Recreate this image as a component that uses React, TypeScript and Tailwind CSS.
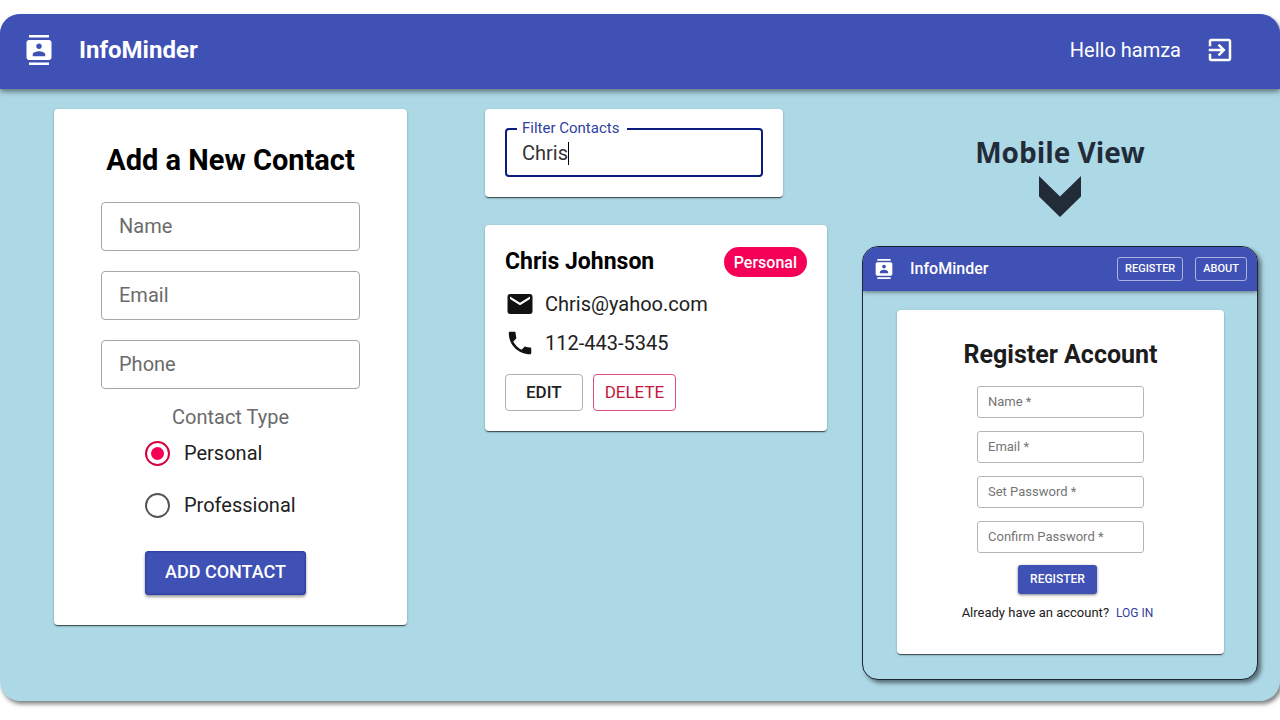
import { useState } from "react";
import type { ReactNode } from "react";
import { MdContacts, MdEmail, MdExitToApp, MdPhone } from "react-icons/md";

const paper =
  "rounded bg-white shadow-[0_2px_1px_-1px_rgba(0,0,0,0.5),0_1px_1px_0_rgba(0,0,0,0.2),0_1px_3px_0_rgba(0,0,0,0.2)]";

type FieldProps = { label: string; type?: string };

function ContactField({ label, type = "text" }: FieldProps) {
  return (
    <input
      type={type}
      aria-label={label}
      placeholder={label}
      className="h-[49px] w-full rounded border border-[#a6a6a6] px-[17px] pb-[2px] text-xl text-[#212121] placeholder:text-[#6b6b6b]"
    />
  );
}

function RegisterField({ label, type = "text" }: FieldProps) {
  return (
    <input
      type={type}
      aria-label={label}
      placeholder={label}
      className="h-8 w-full rounded-[3px] border border-[#b5b5b5] px-[10px] pb-[2px] text-[13px] text-[#212121] placeholder:text-[#757575]"
    />
  );
}

type ChoiceProps = { label: string; checked: boolean; onSelect: () => void };

function TypeChoice({ label, checked, onSelect }: ChoiceProps) {
  return (
    <label className="flex h-[52px] items-center gap-[14px] text-xl text-[#212121]">
      <input
        type="radio"
        name="contact-type"
        checked={checked}
        onChange={onSelect}
        className="size-[25px] shrink-0 appearance-none rounded-full border-2 border-[#555] bg-clip-content p-1 checked:border-[#d5003c] checked:bg-[#f50057]"
      />
      {label}
    </label>
  );
}

function AddContactCard() {
  const [kind, setKind] = useState("Personal");
  return (
    <form className={`${paper} flex flex-col px-[47px] pt-[31px] pb-[30px]`}>
      <h2 className="text-center text-[29px] leading-10 font-bold whitespace-nowrap text-black">
        Add a New Contact
      </h2>
      <div className="mt-[22px] flex flex-col gap-5">
        <ContactField label="Name" />
        <ContactField label="Email" type="email" />
        <ContactField label="Phone" type="tel" />
      </div>
      <fieldset className="mt-4 flex flex-col">
        <legend className="w-full text-center text-xl leading-6 text-[#6b6b6b]">Contact Type</legend>
        <div className="-mt-[2px] flex flex-col px-11">
          <TypeChoice label="Personal" checked={kind === "Personal"} onSelect={() => setKind("Personal")} />
          <TypeChoice
            label="Professional"
            checked={kind === "Professional"}
            onSelect={() => setKind("Professional")}
          />
        </div>
      </fieldset>
      <button
        type="button"
        className="mt-5 ml-11 h-11 self-start rounded bg-[#3f51b5] px-5 pb-[2px] text-lg font-medium text-white shadow-[inset_0_0_2px_1px_#2c3da3,0_2px_3px_rgba(0,0,0,0.4)]"
      >
        ADD CONTACT
      </button>
    </form>
  );
}

function FilterCard() {
  return (
    <div className={`${paper} w-[298px] px-5 pt-[19px] pb-5`}>
      <div className="relative">
        <input
          id="filter"
          type="text"
          defaultValue="Chris"
          className="block h-[49px] w-full rounded border-2 border-[#0c1c80] px-[15px] text-xl text-[#333] outline-none"
        />
        <label
          htmlFor="filter"
          className="absolute -top-[10px] left-3 bg-white pr-2 pl-[5px] text-[15px] leading-5 text-[#303f9f]"
        >
          Filter Contacts
        </label>
        <span className="absolute top-[14px] left-[63px] h-[23px] w-px bg-black" />
      </div>
    </div>
  );
}

function ContactCard() {
  return (
    <article className={`${paper} flex flex-col px-5 pt-[22px] pb-5`}>
      <div className="flex items-center justify-between">
        <h3 className="text-[23px] leading-[30px] font-bold text-black">Chris Johnson</h3>
        <span className="rounded-full bg-[#f50057] px-[10px] pt-px text-base leading-[29px] font-medium text-white">
          Personal
        </span>
      </div>
      <ul className="mt-[7px] text-xl text-[#212121]">
        <li className="flex h-[39px] items-center gap-[10px]">
          <MdEmail className="size-[30px] text-[#111]" />
          Chris@yahoo.com
        </li>
        <li className="flex h-[39px] items-center gap-[10px]">
          <MdPhone className="size-[30px] text-[#111]" />
          112-443-5345
        </li>
      </ul>
      <div className="mt-3 flex gap-[10px]">
        <button
          type="button"
          className="h-[37px] rounded border border-[#b0b0b0] px-5 text-[17px] font-medium text-[#212121]"
        >
          EDIT
        </button>
        <button
          type="button"
          className="h-[37px] rounded border border-[#dc4f7c] px-[11px] text-[17px] text-[#c2183c]"
        >
          DELETE
        </button>
      </div>
    </article>
  );
}

function OutlineButton({ children }: { children: ReactNode }) {
  return (
    <button
      type="button"
      className="h-6 rounded-[3px] border border-[#aab2dd] px-[7px] text-[11px] font-medium text-white"
    >
      {children}
    </button>
  );
}

function PhonePreview() {
  return (
    <section className="overflow-hidden rounded-2xl border border-[#1b2733] bg-[#add8e6] shadow-[3px_3px_4px_rgba(0,0,0,0.5)]">
      <header className="relative flex h-11 items-center bg-[#3f51b5] pr-[10px] pl-[11px] text-white shadow-[0_1px_4px_rgba(0,0,0,0.5)]">
        <MdContacts className="size-5" />
        <h2 className="ml-4 grow text-base font-medium">InfoMinder</h2>
        <div className="flex gap-3">
          <OutlineButton>REGISTER</OutlineButton>
          <OutlineButton>ABOUT</OutlineButton>
        </div>
      </header>
      <div className="pt-[19px] pr-[33px] pb-[25px] pl-[34px]">
        <form className={`${paper} flex flex-col items-center pt-[29px] pb-8`}>
          <h3 className="text-[25px] leading-8 font-bold text-[#1c1c1c]">Register Account</h3>
          <div className="mt-[15px] flex w-[167px] flex-col gap-[13px]">
            <RegisterField label="Name *" />
            <RegisterField label="Email *" type="email" />
            <RegisterField label="Set Password *" type="password" />
            <RegisterField label="Confirm Password *" type="password" />
          </div>
          <div className="flex flex-col items-center pr-[6px]">
            <button
              type="button"
              className="mt-3 h-[29px] rounded-[3px] bg-[#3f51b5] px-3 pb-px text-xs font-medium text-white shadow-[0_1px_3px_rgba(0,0,0,0.5)]"
            >
              REGISTER
            </button>
            <p className="mt-[10px] flex items-center gap-[7px] text-[13px] leading-[18px] text-[#212121]">
              Already have an account?
              <a href="#login" className="text-xs text-[#303f9f]">
                LOG IN
              </a>
            </p>
          </div>
        </form>
      </div>
    </section>
  );
}

export default function App() {
  return (
    <div className="min-h-screen bg-white pt-[14px] pb-[19px] font-[Roboto,sans-serif]">
      <div className="flex min-h-[calc(100vh-33px)] flex-col overflow-hidden rounded-[20px] bg-[#add8e6] shadow-[2px_3px_4px_rgba(0,0,0,0.5)]">
        <header className="relative flex h-[75px] items-center bg-[#3f51b5] pr-[45px] pb-1 pl-6 text-white shadow-[0_2px_6px_rgba(0,0,0,0.55)]">
          <MdContacts className="size-[30px]" />
          <h1 className="ml-[25px] grow text-2xl font-bold">InfoMinder</h1>
          <span className="text-xl">Hello hamza</span>
          <button type="button" aria-label="Log out" className="ml-6">
            <MdExitToApp className="size-[30px]" />
          </button>
        </header>
        <main className="flex items-start pt-5 pr-[22px] pb-5 pl-[54px]">
          <div className="min-w-0 flex-[353]">
            <AddContactCard />
          </div>
          <div className="ml-[78px] flex min-w-0 flex-[342] flex-col gap-7">
            <FilterCard />
            <ContactCard />
          </div>
          <div className="ml-[35px] min-w-0 flex-[396]">
            <div className="flex flex-col items-center pt-6 pb-[29px]">
              <p className="font-['Open_Sans',sans-serif] text-[28px] leading-[38px] font-bold text-[#222b38]">
                Mobile View
              </p>
              <svg viewBox="0 0 42 41" className="mt-[5px] h-[41px] w-[42px] fill-[#222b38]" aria-hidden="true">
                <polygon points="0,0 21,20.5 42,0 42,20.5 21,41 0,20.5" />
              </svg>
            </div>
            <PhonePreview />
          </div>
        </main>
      </div>
    </div>
  );
}
